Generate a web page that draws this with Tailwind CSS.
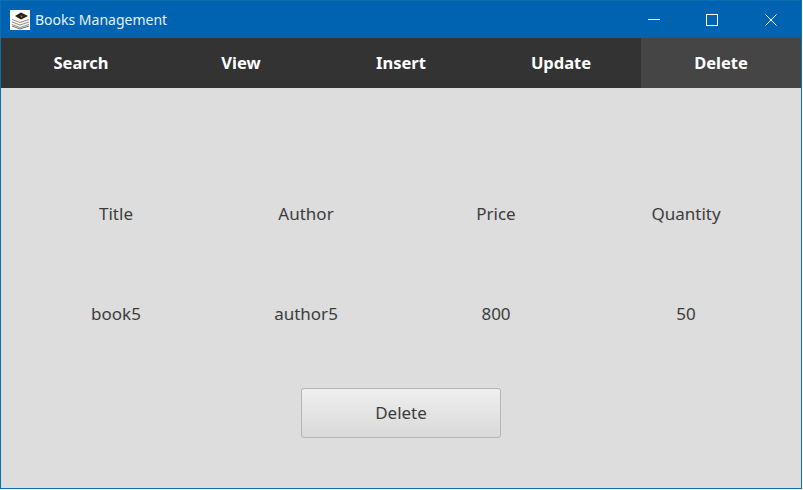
<!DOCTYPE html>
<html lang="en">
<head>
    <meta charset="UTF-8">
    <title>Books Management</title>
    <script src="https://cdn.jsdelivr.net/npm/@tailwindcss/browser@4"></script>
</head>
<body class="w-[803px] h-[490px] overflow-hidden bg-white font-['Noto_Sans',sans-serif]">
    <div class="w-[802px] h-[489px] border border-[#0f6fae] flex flex-col bg-[#dddddd]">
        <!-- title bar -->
        <header class="h-[37px] bg-[#0063b1] flex items-center text-white shrink-0">
            <svg class="ml-[9px] w-5 h-5" viewBox="0 0 20 20">
                <rect width="20" height="20" fill="#fff"/>
                <path d="M2 9 L10 6 L19 9 V15 L10 19 L2 16Z" fill="#faf7ee"/>
                <path d="M2 9.5 L10 12.5 L19 9.5 M2 12 L10 15 L19 12 M2 14.5 L10 17.5 L19 14.5" fill="none" stroke="#777" stroke-width="0.8"/>
                <path d="M2 16 L10 19 L19 16" fill="none" stroke="#444" stroke-width="0.8"/>
                <path d="M5 6 L11 2.5 L18 6 L11 9.5Z" fill="#222"/>
                <path d="M10 5.5 L13 6 L11.5 7.5 Z" fill="#c08a30"/>
            </svg>
            <span class="ml-[5px] text-[14px] text-[#e6f0fa]">Books Management</span>
            <div class="ml-auto flex items-center">
                <button class="w-[58px] h-[37px] flex items-center justify-center">
                    <svg class="w-3 h-3" viewBox="0 0 12 12"><path d="M0 5.5H12" stroke="#fff" stroke-width="1"/></svg>
                </button>
                <button class="w-[58px] h-[37px] flex items-center justify-center">
                    <svg class="w-3 h-3" viewBox="0 0 12 12"><rect x="0.5" y="0.5" width="11" height="11" fill="none" stroke="#fff" stroke-width="1"/></svg>
                </button>
                <button class="w-[60px] h-[37px] flex items-center justify-center">
                    <svg class="w-3 h-3" viewBox="0 0 12 12"><path d="M0.5 0.5L11.5 11.5M11.5 0.5L0.5 11.5" stroke="#fff" stroke-width="1"/></svg>
                </button>
            </div>
        </header>
        <!-- nav tabs -->
        <nav class="h-[50px] grid grid-cols-5 bg-[#333333] text-white font-bold text-[16.5px] shrink-0">
            <a class="flex items-center justify-center pt-[1px]">Search</a>
            <a class="flex items-center justify-center pt-[1px]">View</a>
            <a class="flex items-center justify-center pt-[1px]">Insert</a>
            <a class="flex items-center justify-center pt-[1px]">Update</a>
            <a class="flex items-center justify-center pt-[1px] bg-[#454545]">Delete</a>
        </nav>
        <!-- record -->
        <main class="flex flex-col items-center gap-[50px] pt-[100px] text-[17px] text-[#3c3c3c]">
            <div class="grid grid-cols-4 w-[760px] h-[50px] pt-[1px] items-center text-center">
                <span>Title</span>
                <span>Author</span>
                <span>Price</span>
                <span>Quantity</span>
            </div>
            <div class="grid grid-cols-4 w-[760px] h-[50px] pt-[1px] items-center text-center">
                <span>book5</span>
                <span>author5</span>
                <span>800</span>
                <span>50</span>
            </div>
            <button class="w-[200px] h-[50px] rounded-[3px] border border-[#b5b5b5] bg-gradient-to-b from-[#efefef] to-[#d9d9d9]">Delete</button>
        </main>
    </div>
</body>
</html>
